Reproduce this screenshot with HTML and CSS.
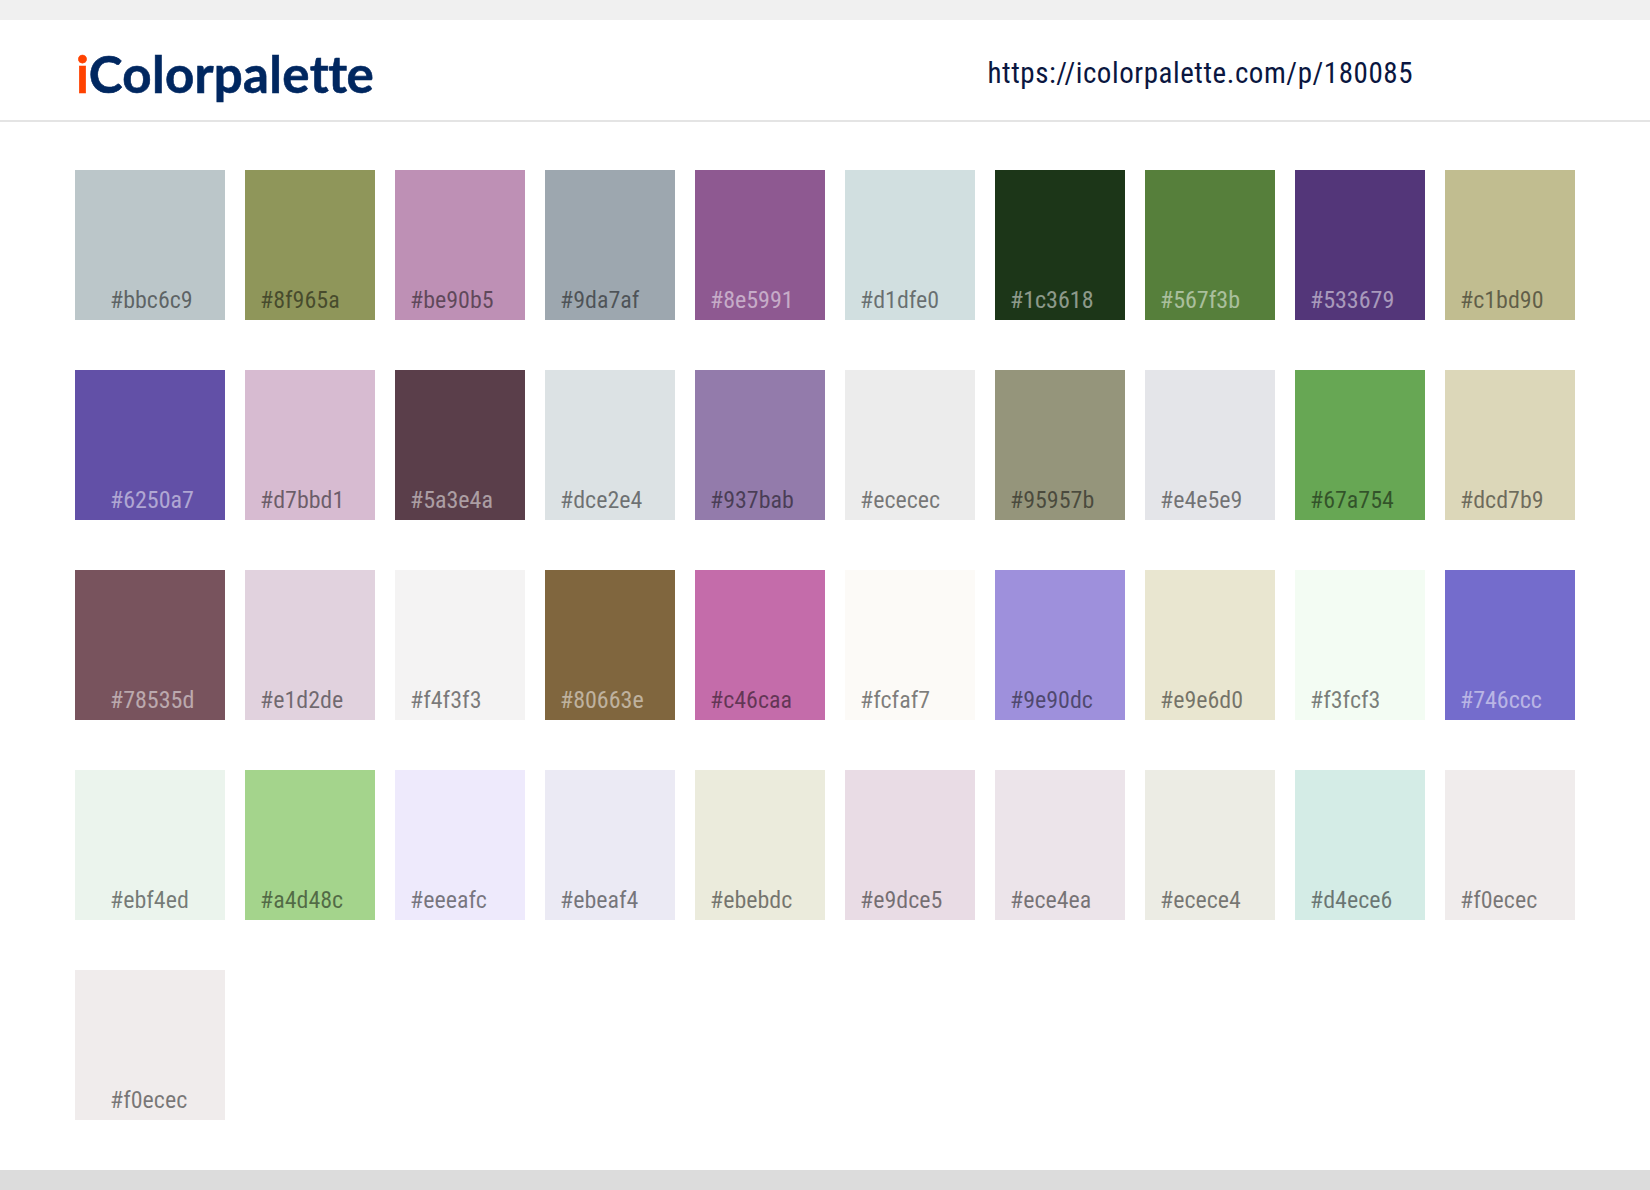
FILE: index.html
```html
<!DOCTYPE html>
<html lang="en">
<head>
<meta charset="utf-8">
<title>iColorpalette</title>
<link rel="stylesheet" href="styles.css">
</head>
<body>
<header class="site-header">
  <div class="logo"><span class="logo-i">i</span>Colorpale<span class="logo-tt">tt</span>e</div>
  <div class="url">https://icolorpalette.com/p/180085</div>
</header>
<main class="palette">
  <div class="swatch ink-dark" style="background:#bbc6c9"><span>#bbc6c9</span></div>
  <div class="swatch ink-dark" style="background:#8f965a"><span>#8f965a</span></div>
  <div class="swatch ink-dark" style="background:#be90b5"><span>#be90b5</span></div>
  <div class="swatch ink-dark" style="background:#9da7af"><span>#9da7af</span></div>
  <div class="swatch ink-light" style="background:#8e5991"><span>#8e5991</span></div>
  <div class="swatch ink-dark" style="background:#d1dfe0"><span>#d1dfe0</span></div>
  <div class="swatch ink-light" style="background:#1c3618"><span>#1c3618</span></div>
  <div class="swatch ink-light" style="background:#567f3b"><span>#567f3b</span></div>
  <div class="swatch ink-light" style="background:#533679"><span>#533679</span></div>
  <div class="swatch ink-dark" style="background:#c1bd90"><span>#c1bd90</span></div>
  <div class="swatch ink-light" style="background:#6250a7"><span>#6250a7</span></div>
  <div class="swatch ink-dark" style="background:#d7bbd1"><span>#d7bbd1</span></div>
  <div class="swatch ink-light" style="background:#5a3e4a"><span>#5a3e4a</span></div>
  <div class="swatch ink-dark" style="background:#dce2e4"><span>#dce2e4</span></div>
  <div class="swatch ink-dark" style="background:#937bab"><span>#937bab</span></div>
  <div class="swatch ink-dark" style="background:#ececec"><span>#ececec</span></div>
  <div class="swatch ink-dark" style="background:#95957b"><span>#95957b</span></div>
  <div class="swatch ink-dark" style="background:#e4e5e9"><span>#e4e5e9</span></div>
  <div class="swatch ink-dark" style="background:#67a754"><span>#67a754</span></div>
  <div class="swatch ink-dark" style="background:#dcd7b9"><span>#dcd7b9</span></div>
  <div class="swatch ink-light" style="background:#78535d"><span>#78535d</span></div>
  <div class="swatch ink-dark" style="background:#e1d2de"><span>#e1d2de</span></div>
  <div class="swatch ink-dark" style="background:#f4f3f3"><span>#f4f3f3</span></div>
  <div class="swatch ink-light" style="background:#80663e"><span>#80663e</span></div>
  <div class="swatch ink-dark" style="background:#c46caa"><span>#c46caa</span></div>
  <div class="swatch ink-dark" style="background:#fcfaf7"><span>#fcfaf7</span></div>
  <div class="swatch ink-dark" style="background:#9e90dc"><span>#9e90dc</span></div>
  <div class="swatch ink-dark" style="background:#e9e6d0"><span>#e9e6d0</span></div>
  <div class="swatch ink-dark" style="background:#f3fcf3"><span>#f3fcf3</span></div>
  <div class="swatch ink-light" style="background:#746ccc"><span>#746ccc</span></div>
  <div class="swatch ink-dark" style="background:#ebf4ed"><span>#ebf4ed</span></div>
  <div class="swatch ink-dark" style="background:#a4d48c"><span>#a4d48c</span></div>
  <div class="swatch ink-dark" style="background:#eeeafc"><span>#eeeafc</span></div>
  <div class="swatch ink-dark" style="background:#ebeaf4"><span>#ebeaf4</span></div>
  <div class="swatch ink-dark" style="background:#ebebdc"><span>#ebebdc</span></div>
  <div class="swatch ink-dark" style="background:#e9dce5"><span>#e9dce5</span></div>
  <div class="swatch ink-dark" style="background:#ece4ea"><span>#ece4ea</span></div>
  <div class="swatch ink-dark" style="background:#ecece4"><span>#ecece4</span></div>
  <div class="swatch ink-dark" style="background:#d4ece6"><span>#d4ece6</span></div>
  <div class="swatch ink-dark" style="background:#f0ecec"><span>#f0ecec</span></div>
  <div class="swatch ink-dark" style="background:#f0ecec"><span>#f0ecec</span></div>
</main>
<footer class="site-footer"></footer>
</body>
</html>
```
FILE: styles.css
```css
* { box-sizing: border-box; }
html, body { margin: 0; padding: 0; background: #fff; }
body {
  width: 1650px;
  height: 1190px;
  display: flex;
  flex-direction: column;
  border-top: 20px solid #f0f0f0;
  font-family: Roboto, "Liberation Sans", sans-serif;
  overflow: hidden;
}
.site-header {
  height: 102px;
  flex: none;
  display: flex;
  align-items: flex-start;
  border-bottom: 2px solid #e4e4e4;
  padding-left: 76px;
}
.logo {
  width: 911.5px;
  font-family: Lato, sans-serif;
  font-weight: 700;
  font-size: 51px;
  line-height: 60px;
  letter-spacing: 0.3px;
  color: #002760;
  -webkit-text-stroke: 0.6px #002760;
  padding-top: 24px;
}
.logo-i { color: #ff4200; -webkit-text-stroke-color: #ff4200; }
.logo-tt { letter-spacing: -0.6px; }
.url {
  font-size: 29px;
  line-height: 34px;
  letter-spacing: 0.55px;
  font-stretch: condensed;
  color: #0a1640;
  padding-top: 36px;
  white-space: nowrap;
}
.palette {
  flex: 1;
  display: grid;
  grid-template-columns: 150px repeat(9, 130px);
  grid-auto-rows: 150px;
  column-gap: 20px;
  row-gap: 50px;
  padding: 48px 75px 0;
}
.swatch {
  display: flex;
  align-items: flex-end;
  padding: 0 0 6px 15px;
  font-size: 24px;
  line-height: 28px;
  font-stretch: condensed;
  white-space: nowrap;
}
.swatch:nth-child(10n+1) { padding-left: 35px; }
.ink-dark span { color: rgba(0, 0, 0, 0.5); }
.ink-light span { color: rgba(255, 255, 255, 0.5); }
.site-footer {
  height: 20px;
  flex: none;
  background: #dcdcdc;
}
```
